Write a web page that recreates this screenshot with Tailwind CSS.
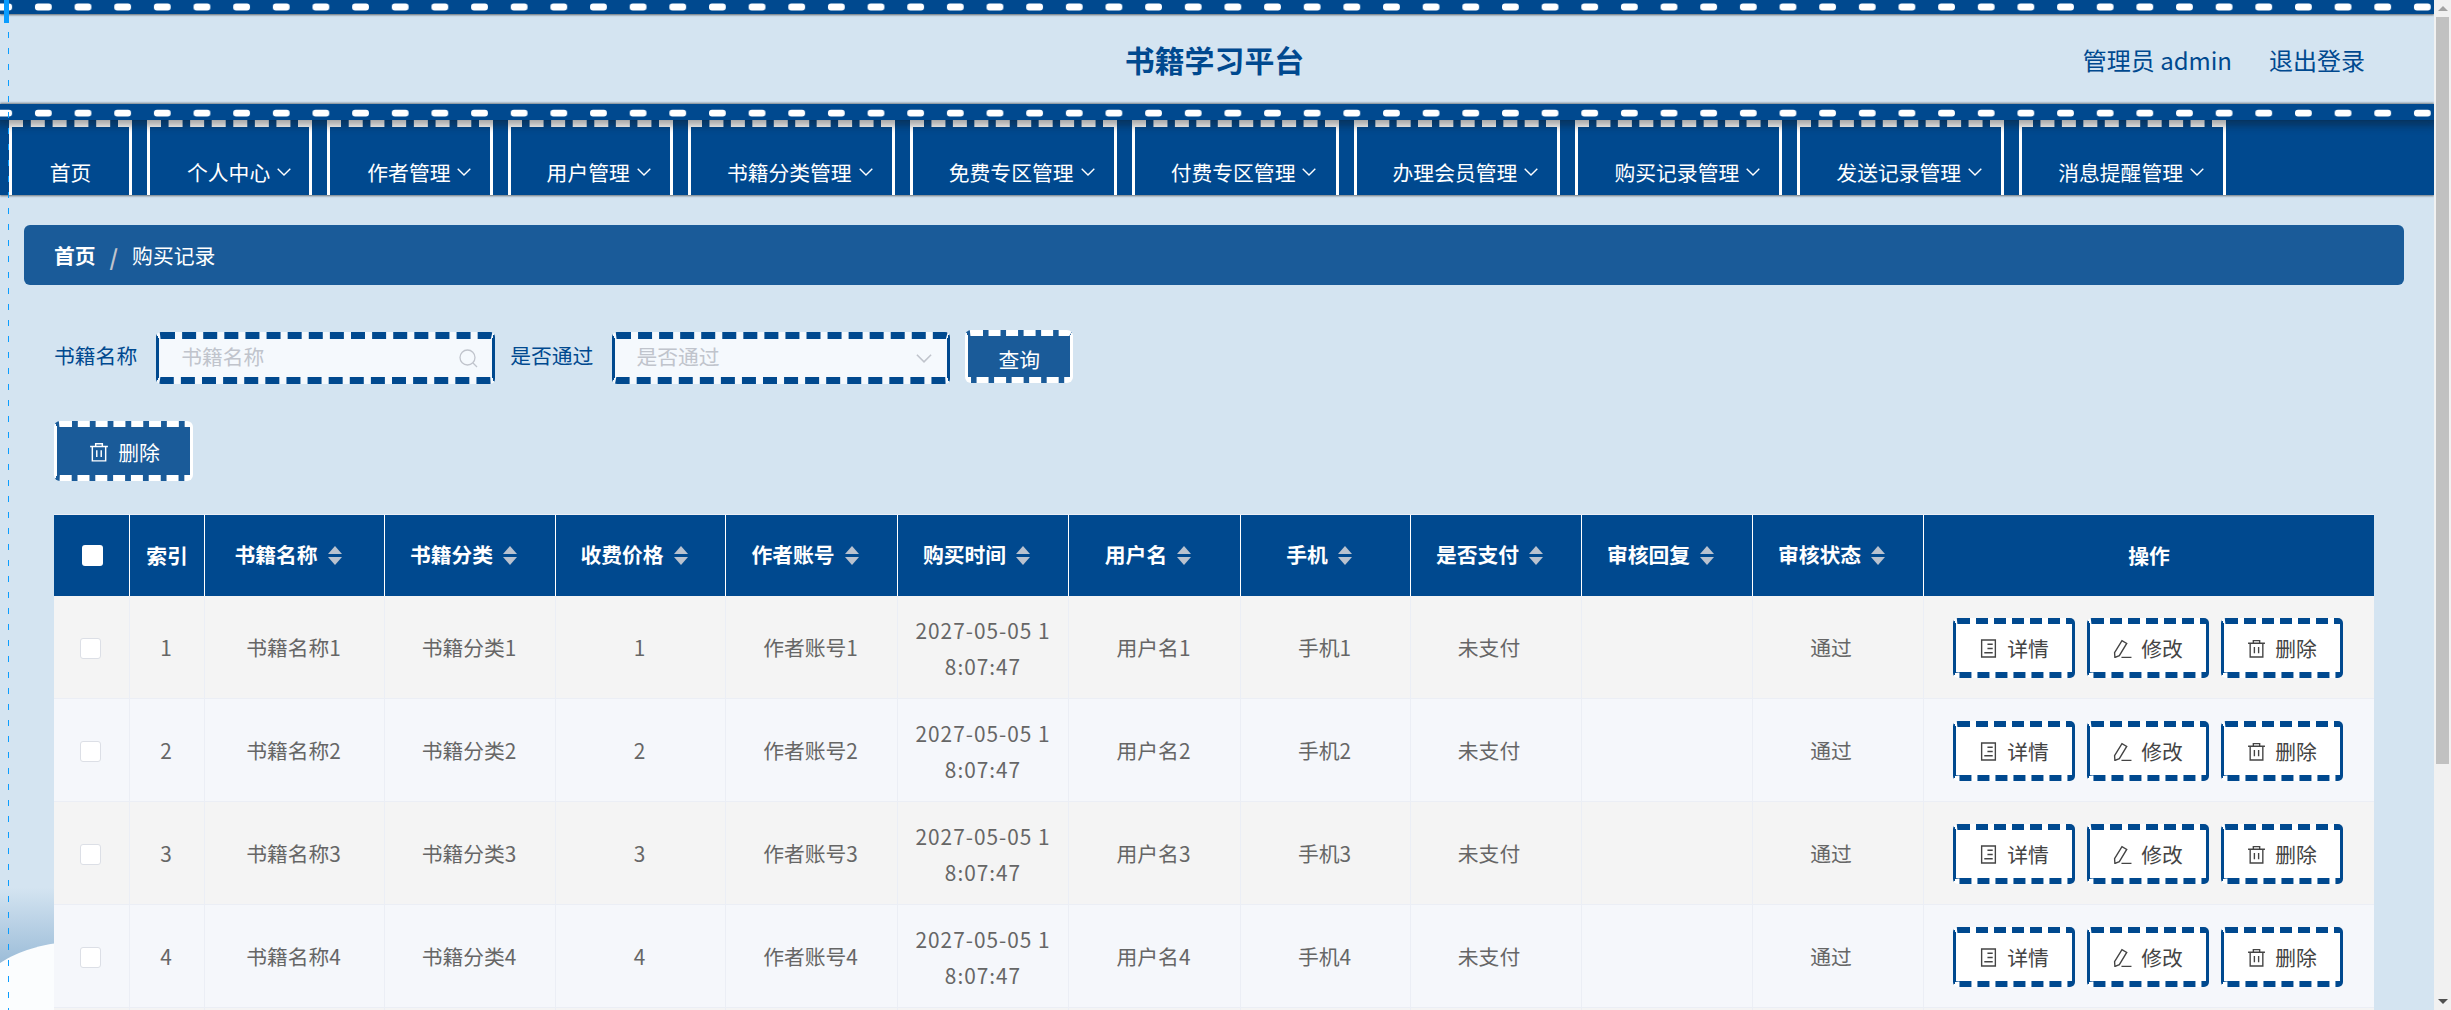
<!DOCTYPE html>
<html lang="zh-CN">
<head>
<meta charset="utf-8">
<title>书籍学习平台</title>
<script src="https://cdn.jsdelivr.net/npm/@tailwindcss/browser@4"></script>
</head>
<body class="h-screen overflow-hidden bg-[#d4e4f1] [font-family:'Noto_Sans_CJK_SC','Noto_Sans',sans-serif] text-[20.8px]">
<svg class="absolute h-0 w-0">
  <defs>
    <symbol id="i-del" viewBox="0 0 18 18"><path d="M1 4h16M6 4V1.5h6V4M3 4v13h12V4M7 7.5v6M11 7.5v6" fill="none" stroke="currentColor" stroke-width="1.3"/></symbol>
    <symbol id="i-doc" viewBox="0 0 18 18"><path d="M2.5 1h13v16h-13zM8 5h5M8 9h5M5 13h8" fill="none" stroke="currentColor" stroke-width="1.3"/></symbol>
    <symbol id="i-edit" viewBox="0 0 18 18"><path d="M1.5 13L8.5 1.5l4.5 2.7L6 15.8 1.8 17.5zM8 17.5h9.5" fill="none" stroke="currentColor" stroke-width="1.3"/></symbol>
    <symbol id="i-chev" viewBox="0 0 14 8"><path d="M.7.7L7 7l6.3-6.3" fill="none" stroke="currentColor" stroke-width="1.4"/></symbol>
    <symbol id="i-sort" viewBox="0 0 14 19"><path d="M7 0l7 8H0zM7 19l7-8H0z" fill="#b9c2cf"/></symbol>
    <pattern id="stitch-a" x="-4.7" y="0" width="39.65" height="14" patternUnits="userSpaceOnUse"><rect x="0" y="3.6" width="16.8" height="6.8" rx="3" fill="#fff"/></pattern>
    <pattern id="stitch-b" x="-4.7" y="0" width="39.65" height="16" patternUnits="userSpaceOnUse"><rect x="0" y="5.8" width="16.8" height="6.8" rx="3" fill="#fff"/></pattern>
  </defs>
</svg>

<div class="flex h-full w-full">
  <div class="relative h-full w-[2434px] shrink-0 overflow-hidden bg-[#d4e4f1]">
    <svg class="absolute left-0 top-[860px] h-[150px] w-[70px]" viewBox="0 0 70 150">
      <defs><linearGradient id="hill" x1="0" y1="0" x2="0" y2="1"><stop offset="0.25" stop-color="#d4e4f1"/><stop offset="1" stop-color="#97b9d6"/></linearGradient></defs>
      <rect width="70" height="110" fill="url(#hill)"/>
      <path d="M0 103C20 90 40 85 70 81V150H0z" fill="#fbfdfe"/>
    </svg>

    <header class="relative z-10">
      <div class="h-[14px] overflow-hidden bg-[#00498f] shadow-[0_1px_2px_rgba(0,0,0,0.55)]">
        <svg class="block h-full w-full blur-[0.5px]"><rect width="100%" height="100%" fill="url(#stitch-a)"/></svg>
      </div>
      <div class="grid h-[90px] grid-cols-[1fr_auto_1fr] items-center pt-[2px] text-[#00498f]">
        <div></div>
        <h1 class="mr-[5px] text-[29.9px] font-bold leading-none">书籍学习平台</h1>
        <div class="flex items-center justify-end gap-[37px] pr-[69px] text-[24px]">
          <span>管理员 admin</span>
          <span>退出登录</span>
        </div>
      </div>
      <div class="relative h-[16px] overflow-hidden bg-[#00498f] shadow-[0_-1px_2px_rgba(0,0,0,0.45)]">
        <svg class="block h-full w-full blur-[0.5px]"><rect width="100%" height="100%" fill="url(#stitch-b)"/></svg>
      </div>
      <div class="pointer-events-none h-0 shadow-[0_0_10px_4px_rgba(20,20,20,0.55)]"></div>
    </header>

    <nav class="flex h-[75px] gap-[15px] bg-[#00498f] pl-[9px] text-white shadow-[0_1px_2px_rgba(0,0,0,0.5)]">
      <a class="flex w-[123px] items-end justify-center rounded-none [border-style:dashed_solid_solid] [border-width:7px_3px_0] border-white pb-[8px] leading-[30px]">首页</a>
      <a class="flex w-[165.3px] items-end [border-style:dashed_solid_solid] [border-width:7px_3px_0] border-white pb-[8px] pl-[37px] leading-[30px]">个人中心<svg class="mb-[11px] ml-[7px] h-[8px] w-[14px]"><use href="#i-chev"/></svg></a>
      <a class="flex w-[165.3px] items-end [border-style:dashed_solid_solid] [border-width:7px_3px_0] border-white pb-[8px] pl-[37px] leading-[30px]">作者管理<svg class="mb-[11px] ml-[7px] h-[8px] w-[14px]"><use href="#i-chev"/></svg></a>
      <a class="flex w-[165.3px] items-end [border-style:dashed_solid_solid] [border-width:7px_3px_0] border-white pb-[8px] pl-[36px] leading-[30px]">用户管理<svg class="mb-[11px] ml-[7px] h-[8px] w-[14px]"><use href="#i-chev"/></svg></a>
      <a class="flex w-[206.9px] items-end [border-style:dashed_solid_solid] [border-width:7px_3px_0] border-white pb-[8px] pl-[36px] leading-[30px]">书籍分类管理<svg class="mb-[11px] ml-[7px] h-[8px] w-[14px]"><use href="#i-chev"/></svg></a>
      <a class="flex w-[206.9px] items-end [border-style:dashed_solid_solid] [border-width:7px_3px_0] border-white pb-[8px] pl-[36px] leading-[30px]">免费专区管理<svg class="mb-[11px] ml-[7px] h-[8px] w-[14px]"><use href="#i-chev"/></svg></a>
      <a class="flex w-[206.9px] items-end [border-style:dashed_solid_solid] [border-width:7px_3px_0] border-white pb-[8px] pl-[36px] leading-[30px]">付费专区管理<svg class="mb-[11px] ml-[7px] h-[8px] w-[14px]"><use href="#i-chev"/></svg></a>
      <a class="flex w-[206.9px] items-end [border-style:dashed_solid_solid] [border-width:7px_3px_0] border-white pb-[8px] pl-[36px] leading-[30px]">办理会员管理<svg class="mb-[11px] ml-[7px] h-[8px] w-[14px]"><use href="#i-chev"/></svg></a>
      <a class="flex w-[206.9px] items-end [border-style:dashed_solid_solid] [border-width:7px_3px_0] border-white pb-[8px] pl-[36px] leading-[30px]">购买记录管理<svg class="mb-[11px] ml-[7px] h-[8px] w-[14px]"><use href="#i-chev"/></svg></a>
      <a class="flex w-[206.9px] items-end [border-style:dashed_solid_solid] [border-width:7px_3px_0] border-white pb-[8px] pl-[36px] leading-[30px]">发送记录管理<svg class="mb-[11px] ml-[7px] h-[8px] w-[14px]"><use href="#i-chev"/></svg></a>
      <a class="flex w-[206.9px] items-end [border-style:dashed_solid_solid] [border-width:7px_3px_0] border-white pb-[8px] pl-[36px] leading-[30px]">消息提醒管理<svg class="mb-[11px] ml-[7px] h-[8px] w-[14px]"><use href="#i-chev"/></svg></a>
    </nav>

    <main class="relative">
      <div class="ml-[24px] mt-[30px] flex h-[60px] w-[2380px] items-center rounded-[6px] bg-[#1a5b99] pl-[30px] pt-[2px] text-white">
        <b class="font-bold">首页</b>
        <span class="mx-[14px] text-[22px] font-bold text-[#c0c4cc]">/</span>
        <span>购买记录</span>
      </div>

      <form class="ml-[54px] mt-[45px] flex items-start">
        <label class="mb-[2px] flex h-[52px] items-center text-[#00498f]">书籍名称</label>
        <div class="ml-[19px] mt-[2px] flex h-[52px] w-[339px] items-center rounded-[5px] bg-[#f5f9fd] pl-[22px] pr-[14px] [border-color:#00498f] [border-style:dashed_solid] [border-width:7px_3px]">
          <input class="mb-[2px] min-w-0 flex-1 bg-transparent outline-none placeholder:text-[#c0c4cc]" placeholder="书籍名称">
          <svg class="h-[19px] w-[19px] text-[#c0c4cc]" viewBox="0 0 19 19"><circle cx="8.5" cy="8.5" r="7.5" fill="none" stroke="currentColor" stroke-width="1.3"/><path d="M14 14l4 4" stroke="currentColor" stroke-width="1.3"/></svg>
        </div>
        <label class="mb-[2px] ml-[15px] flex h-[52px] items-center text-[#00498f]">是否通过</label>
        <div class="ml-[19px] mt-[2px] flex h-[52px] w-[338px] items-center rounded-[5px] bg-[#f5f9fd] pl-[21px] pr-[15px] [border-color:#00498f] [border-style:dashed_solid] [border-width:7px_3px]">
          <input class="mb-[2px] min-w-0 flex-1 bg-transparent outline-none placeholder:text-[#c0c4cc]" placeholder="是否通过">
          <svg class="h-[9px] w-[16px] text-[#c0c4cc]"><use href="#i-chev"/></svg>
        </div>
        <button type="button" class="ml-[15px] flex h-[53px] w-[108px] items-center justify-center rounded-[6px] bg-[#1a5b99] pt-[5px] leading-none text-white [border-color:#fff] [border-style:dashed_solid] [border-width:6px_3px]">查询</button>
      </form>

      <div class="ml-[54px] mt-[37px]">
        <button type="button" class="flex h-[60px] w-[139px] items-center justify-center gap-[9px] rounded-[6px] bg-[#1a5b99] pl-[2px] pt-[2px] leading-none text-white [border-color:#fff] [border-style:dashed_solid] [border-width:6px_3px]"><svg class="h-[20px] w-[20px]"><use href="#i-del"/></svg>删除</button>
      </div>

      <table class="ml-[54px] mt-[33px] w-[2320px] table-fixed border-separate border-spacing-0 border-t border-[#ebeef5] text-center text-[#666666]">
        <colgroup>
          <col class="w-[76px]"><col class="w-[75px]"><col class="w-[180px]"><col class="w-[171px]"><col class="w-[170px]"><col class="w-[172px]"><col class="w-[171px]"><col class="w-[172px]"><col class="w-[170px]"><col class="w-[171px]"><col class="w-[171px]"><col class="w-[171px]"><col class="w-[450px]">
        </colgroup>
        <thead>
          <tr class="h-[81px] bg-[#00498f] text-white">
            <th class="border-r border-white pl-[2px]"><span class="mx-auto block h-[21px] w-[21px] rounded-[3px] bg-white"></span></th>
            <th class="border-r border-white font-bold">索引</th>
            <th class="border-r border-white font-bold"><div class="flex items-center justify-center"><span class="mb-[2px]">书籍名称</span><svg class="ml-[10px] mr-[13px] h-[19px] w-[14px]"><use href="#i-sort"/></svg></div></th>
            <th class="border-r border-white font-bold"><div class="flex items-center justify-center"><span class="mb-[2px]">书籍分类</span><svg class="ml-[10px] mr-[13px] h-[19px] w-[14px]"><use href="#i-sort"/></svg></div></th>
            <th class="border-r border-white font-bold"><div class="flex items-center justify-center"><span class="mb-[2px]">收费价格</span><svg class="ml-[10px] mr-[13px] h-[19px] w-[14px]"><use href="#i-sort"/></svg></div></th>
            <th class="border-r border-white font-bold"><div class="flex items-center justify-center"><span class="mb-[2px]">作者账号</span><svg class="ml-[10px] mr-[13px] h-[19px] w-[14px]"><use href="#i-sort"/></svg></div></th>
            <th class="border-r border-white font-bold"><div class="flex items-center justify-center"><span class="mb-[2px]">购买时间</span><svg class="ml-[10px] mr-[13px] h-[19px] w-[14px]"><use href="#i-sort"/></svg></div></th>
            <th class="border-r border-white font-bold"><div class="flex items-center justify-center"><span class="mb-[2px]">用户名</span><svg class="ml-[10px] mr-[13px] h-[19px] w-[14px]"><use href="#i-sort"/></svg></div></th>
            <th class="border-r border-white font-bold"><div class="flex items-center justify-center"><span class="mb-[2px]">手机</span><svg class="ml-[10px] mr-[13px] h-[19px] w-[14px]"><use href="#i-sort"/></svg></div></th>
            <th class="border-r border-white font-bold"><div class="flex items-center justify-center"><span class="mb-[2px]">是否支付</span><svg class="ml-[10px] mr-[13px] h-[19px] w-[14px]"><use href="#i-sort"/></svg></div></th>
            <th class="border-r border-white font-bold"><div class="flex items-center justify-center"><span class="mb-[2px]">审核回复</span><svg class="ml-[10px] mr-[13px] h-[19px] w-[14px]"><use href="#i-sort"/></svg></div></th>
            <th class="border-r border-white font-bold"><div class="flex items-center justify-center"><span class="mb-[2px]">审核状态</span><svg class="ml-[10px] mr-[13px] h-[19px] w-[14px]"><use href="#i-sort"/></svg></div></th>
            <th class="font-bold">操作</th>
          </tr>
        </thead>
        <tbody class="[&_td]:pr-[2px] [&_td]:pt-[2px]">
          <tr class="h-[103px] bg-[#f4f4f4]">
            <td class="border-b border-r border-[#ebeef5]"><span class="mx-auto block h-[21px] w-[21px] rounded-[3px] border border-[#dcdfe6] bg-white"></span></td>
            <td class="border-b border-r border-[#ebeef5]">1</td>
            <td class="border-b border-r border-[#ebeef5]">书籍名称1</td>
            <td class="border-b border-r border-[#ebeef5]">书籍分类1</td>
            <td class="border-b border-r border-[#ebeef5]">1</td>
            <td class="border-b border-r border-[#ebeef5]">作者账号1</td>
            <td class="border-b border-r border-[#ebeef5]"><div class="ml-[16px] mr-[14px] break-all leading-[36px] tracking-[1px]">2027-05-05 18:07:47</div></td>
            <td class="border-b border-r border-[#ebeef5]">用户名1</td>
            <td class="border-b border-r border-[#ebeef5]">手机1</td>
            <td class="border-b border-r border-[#ebeef5]"><span class="mr-[12px]">未支付</span></td>
            <td class="border-b border-r border-[#ebeef5]"></td>
            <td class="border-b border-r border-[#ebeef5]"><span class="mr-[12px]">通过</span></td>
            <td class="border-b border-[#ebeef5]">
              <div class="flex justify-center gap-[12px] text-[#444444]">
                <button type="button" class="flex h-[60px] w-[122px] items-center justify-center gap-[9px] rounded-[5px] bg-white leading-none [border-color:#00498f] [border-style:dashed_solid] [border-width:6px_3px]"><svg class="h-[19px] w-[19px]"><use href="#i-doc"/></svg>详情</button>
                <button type="button" class="flex h-[60px] w-[122px] items-center justify-center gap-[9px] rounded-[5px] bg-white leading-none [border-color:#00498f] [border-style:dashed_solid] [border-width:6px_3px]"><svg class="h-[19px] w-[19px]"><use href="#i-edit"/></svg>修改</button>
                <button type="button" class="flex h-[60px] w-[122px] items-center justify-center gap-[9px] rounded-[5px] bg-white leading-none [border-color:#00498f] [border-style:dashed_solid] [border-width:6px_3px]"><svg class="h-[19px] w-[19px]"><use href="#i-del"/></svg>删除</button>
              </div>
            </td>
          </tr>
          <tr class="h-[103px] bg-[#f5f7fb]">
            <td class="border-b border-r border-[#ebeef5]"><span class="mx-auto block h-[21px] w-[21px] rounded-[3px] border border-[#dcdfe6] bg-white"></span></td>
            <td class="border-b border-r border-[#ebeef5]">2</td>
            <td class="border-b border-r border-[#ebeef5]">书籍名称2</td>
            <td class="border-b border-r border-[#ebeef5]">书籍分类2</td>
            <td class="border-b border-r border-[#ebeef5]">2</td>
            <td class="border-b border-r border-[#ebeef5]">作者账号2</td>
            <td class="border-b border-r border-[#ebeef5]"><div class="ml-[16px] mr-[14px] break-all leading-[36px] tracking-[1px]">2027-05-05 18:07:47</div></td>
            <td class="border-b border-r border-[#ebeef5]">用户名2</td>
            <td class="border-b border-r border-[#ebeef5]">手机2</td>
            <td class="border-b border-r border-[#ebeef5]"><span class="mr-[12px]">未支付</span></td>
            <td class="border-b border-r border-[#ebeef5]"></td>
            <td class="border-b border-r border-[#ebeef5]"><span class="mr-[12px]">通过</span></td>
            <td class="border-b border-[#ebeef5]">
              <div class="flex justify-center gap-[12px] text-[#444444]">
                <button type="button" class="flex h-[60px] w-[122px] items-center justify-center gap-[9px] rounded-[5px] bg-white leading-none [border-color:#00498f] [border-style:dashed_solid] [border-width:6px_3px]"><svg class="h-[19px] w-[19px]"><use href="#i-doc"/></svg>详情</button>
                <button type="button" class="flex h-[60px] w-[122px] items-center justify-center gap-[9px] rounded-[5px] bg-white leading-none [border-color:#00498f] [border-style:dashed_solid] [border-width:6px_3px]"><svg class="h-[19px] w-[19px]"><use href="#i-edit"/></svg>修改</button>
                <button type="button" class="flex h-[60px] w-[122px] items-center justify-center gap-[9px] rounded-[5px] bg-white leading-none [border-color:#00498f] [border-style:dashed_solid] [border-width:6px_3px]"><svg class="h-[19px] w-[19px]"><use href="#i-del"/></svg>删除</button>
              </div>
            </td>
          </tr>
          <tr class="h-[103px] bg-[#f4f4f4]">
            <td class="border-b border-r border-[#ebeef5]"><span class="mx-auto block h-[21px] w-[21px] rounded-[3px] border border-[#dcdfe6] bg-white"></span></td>
            <td class="border-b border-r border-[#ebeef5]">3</td>
            <td class="border-b border-r border-[#ebeef5]">书籍名称3</td>
            <td class="border-b border-r border-[#ebeef5]">书籍分类3</td>
            <td class="border-b border-r border-[#ebeef5]">3</td>
            <td class="border-b border-r border-[#ebeef5]">作者账号3</td>
            <td class="border-b border-r border-[#ebeef5]"><div class="ml-[16px] mr-[14px] break-all leading-[36px] tracking-[1px]">2027-05-05 18:07:47</div></td>
            <td class="border-b border-r border-[#ebeef5]">用户名3</td>
            <td class="border-b border-r border-[#ebeef5]">手机3</td>
            <td class="border-b border-r border-[#ebeef5]"><span class="mr-[12px]">未支付</span></td>
            <td class="border-b border-r border-[#ebeef5]"></td>
            <td class="border-b border-r border-[#ebeef5]"><span class="mr-[12px]">通过</span></td>
            <td class="border-b border-[#ebeef5]">
              <div class="flex justify-center gap-[12px] text-[#444444]">
                <button type="button" class="flex h-[60px] w-[122px] items-center justify-center gap-[9px] rounded-[5px] bg-white leading-none [border-color:#00498f] [border-style:dashed_solid] [border-width:6px_3px]"><svg class="h-[19px] w-[19px]"><use href="#i-doc"/></svg>详情</button>
                <button type="button" class="flex h-[60px] w-[122px] items-center justify-center gap-[9px] rounded-[5px] bg-white leading-none [border-color:#00498f] [border-style:dashed_solid] [border-width:6px_3px]"><svg class="h-[19px] w-[19px]"><use href="#i-edit"/></svg>修改</button>
                <button type="button" class="flex h-[60px] w-[122px] items-center justify-center gap-[9px] rounded-[5px] bg-white leading-none [border-color:#00498f] [border-style:dashed_solid] [border-width:6px_3px]"><svg class="h-[19px] w-[19px]"><use href="#i-del"/></svg>删除</button>
              </div>
            </td>
          </tr>
          <tr class="h-[103px] bg-[#f5f7fb]">
            <td class="border-b border-r border-[#ebeef5]"><span class="mx-auto block h-[21px] w-[21px] rounded-[3px] border border-[#dcdfe6] bg-white"></span></td>
            <td class="border-b border-r border-[#ebeef5]">4</td>
            <td class="border-b border-r border-[#ebeef5]">书籍名称4</td>
            <td class="border-b border-r border-[#ebeef5]">书籍分类4</td>
            <td class="border-b border-r border-[#ebeef5]">4</td>
            <td class="border-b border-r border-[#ebeef5]">作者账号4</td>
            <td class="border-b border-r border-[#ebeef5]"><div class="ml-[16px] mr-[14px] break-all leading-[36px] tracking-[1px]">2027-05-05 18:07:47</div></td>
            <td class="border-b border-r border-[#ebeef5]">用户名4</td>
            <td class="border-b border-r border-[#ebeef5]">手机4</td>
            <td class="border-b border-r border-[#ebeef5]"><span class="mr-[12px]">未支付</span></td>
            <td class="border-b border-r border-[#ebeef5]"></td>
            <td class="border-b border-r border-[#ebeef5]"><span class="mr-[12px]">通过</span></td>
            <td class="border-b border-[#ebeef5]">
              <div class="flex justify-center gap-[12px] text-[#444444]">
                <button type="button" class="flex h-[60px] w-[122px] items-center justify-center gap-[9px] rounded-[5px] bg-white leading-none [border-color:#00498f] [border-style:dashed_solid] [border-width:6px_3px]"><svg class="h-[19px] w-[19px]"><use href="#i-doc"/></svg>详情</button>
                <button type="button" class="flex h-[60px] w-[122px] items-center justify-center gap-[9px] rounded-[5px] bg-white leading-none [border-color:#00498f] [border-style:dashed_solid] [border-width:6px_3px]"><svg class="h-[19px] w-[19px]"><use href="#i-edit"/></svg>修改</button>
                <button type="button" class="flex h-[60px] w-[122px] items-center justify-center gap-[9px] rounded-[5px] bg-white leading-none [border-color:#00498f] [border-style:dashed_solid] [border-width:6px_3px]"><svg class="h-[19px] w-[19px]"><use href="#i-del"/></svg>删除</button>
              </div>
            </td>
          </tr>
          <tr class="h-[103px] bg-[#f4f4f4]">
            <td class="border-b border-r border-[#ebeef5]"></td>
            <td class="border-b border-r border-[#ebeef5]"></td>
            <td class="border-b border-r border-[#ebeef5]"></td>
            <td class="border-b border-r border-[#ebeef5]"></td>
            <td class="border-b border-r border-[#ebeef5]"></td>
            <td class="border-b border-r border-[#ebeef5]"></td>
            <td class="border-b border-r border-[#ebeef5]"></td>
            <td class="border-b border-r border-[#ebeef5]"></td>
            <td class="border-b border-r border-[#ebeef5]"></td>
            <td class="border-b border-r border-[#ebeef5]"></td>
            <td class="border-b border-r border-[#ebeef5]"></td>
            <td class="border-b border-r border-[#ebeef5]"></td>
            <td class="border-b border-[#ebeef5]"></td>
          </tr>
        </tbody>
      </table>
    </main>

    <div class="absolute left-[4px] top-0 z-20 h-[23px] w-[5px] bg-[#0a9dff]"></div>
    <div class="absolute bottom-0 left-[8px] top-[32px] z-20 w-px bg-[repeating-linear-gradient(180deg,#0a9dff_0_6px,transparent_6px_16px)]"></div>
  </div>

  <aside class="flex h-full w-[17px] shrink-0 flex-col items-center bg-[#f1f1f1]">
    <div class="flex h-[17px] w-full items-center justify-center">
      <span class="h-0 w-0 border-x-[5px] border-b-[5px] border-x-transparent border-b-[#a3a3a3]"></span>
    </div>
    <div class="h-[747px] w-[13px] bg-[#c1c1c1]"></div>
    <div class="flex-1"></div>
    <div class="flex h-[17px] w-full items-center justify-center">
      <span class="h-0 w-0 border-x-[5px] border-t-[5px] border-x-transparent border-t-[#505050]"></span>
    </div>
  </aside>
</div>
</body>
</html>
